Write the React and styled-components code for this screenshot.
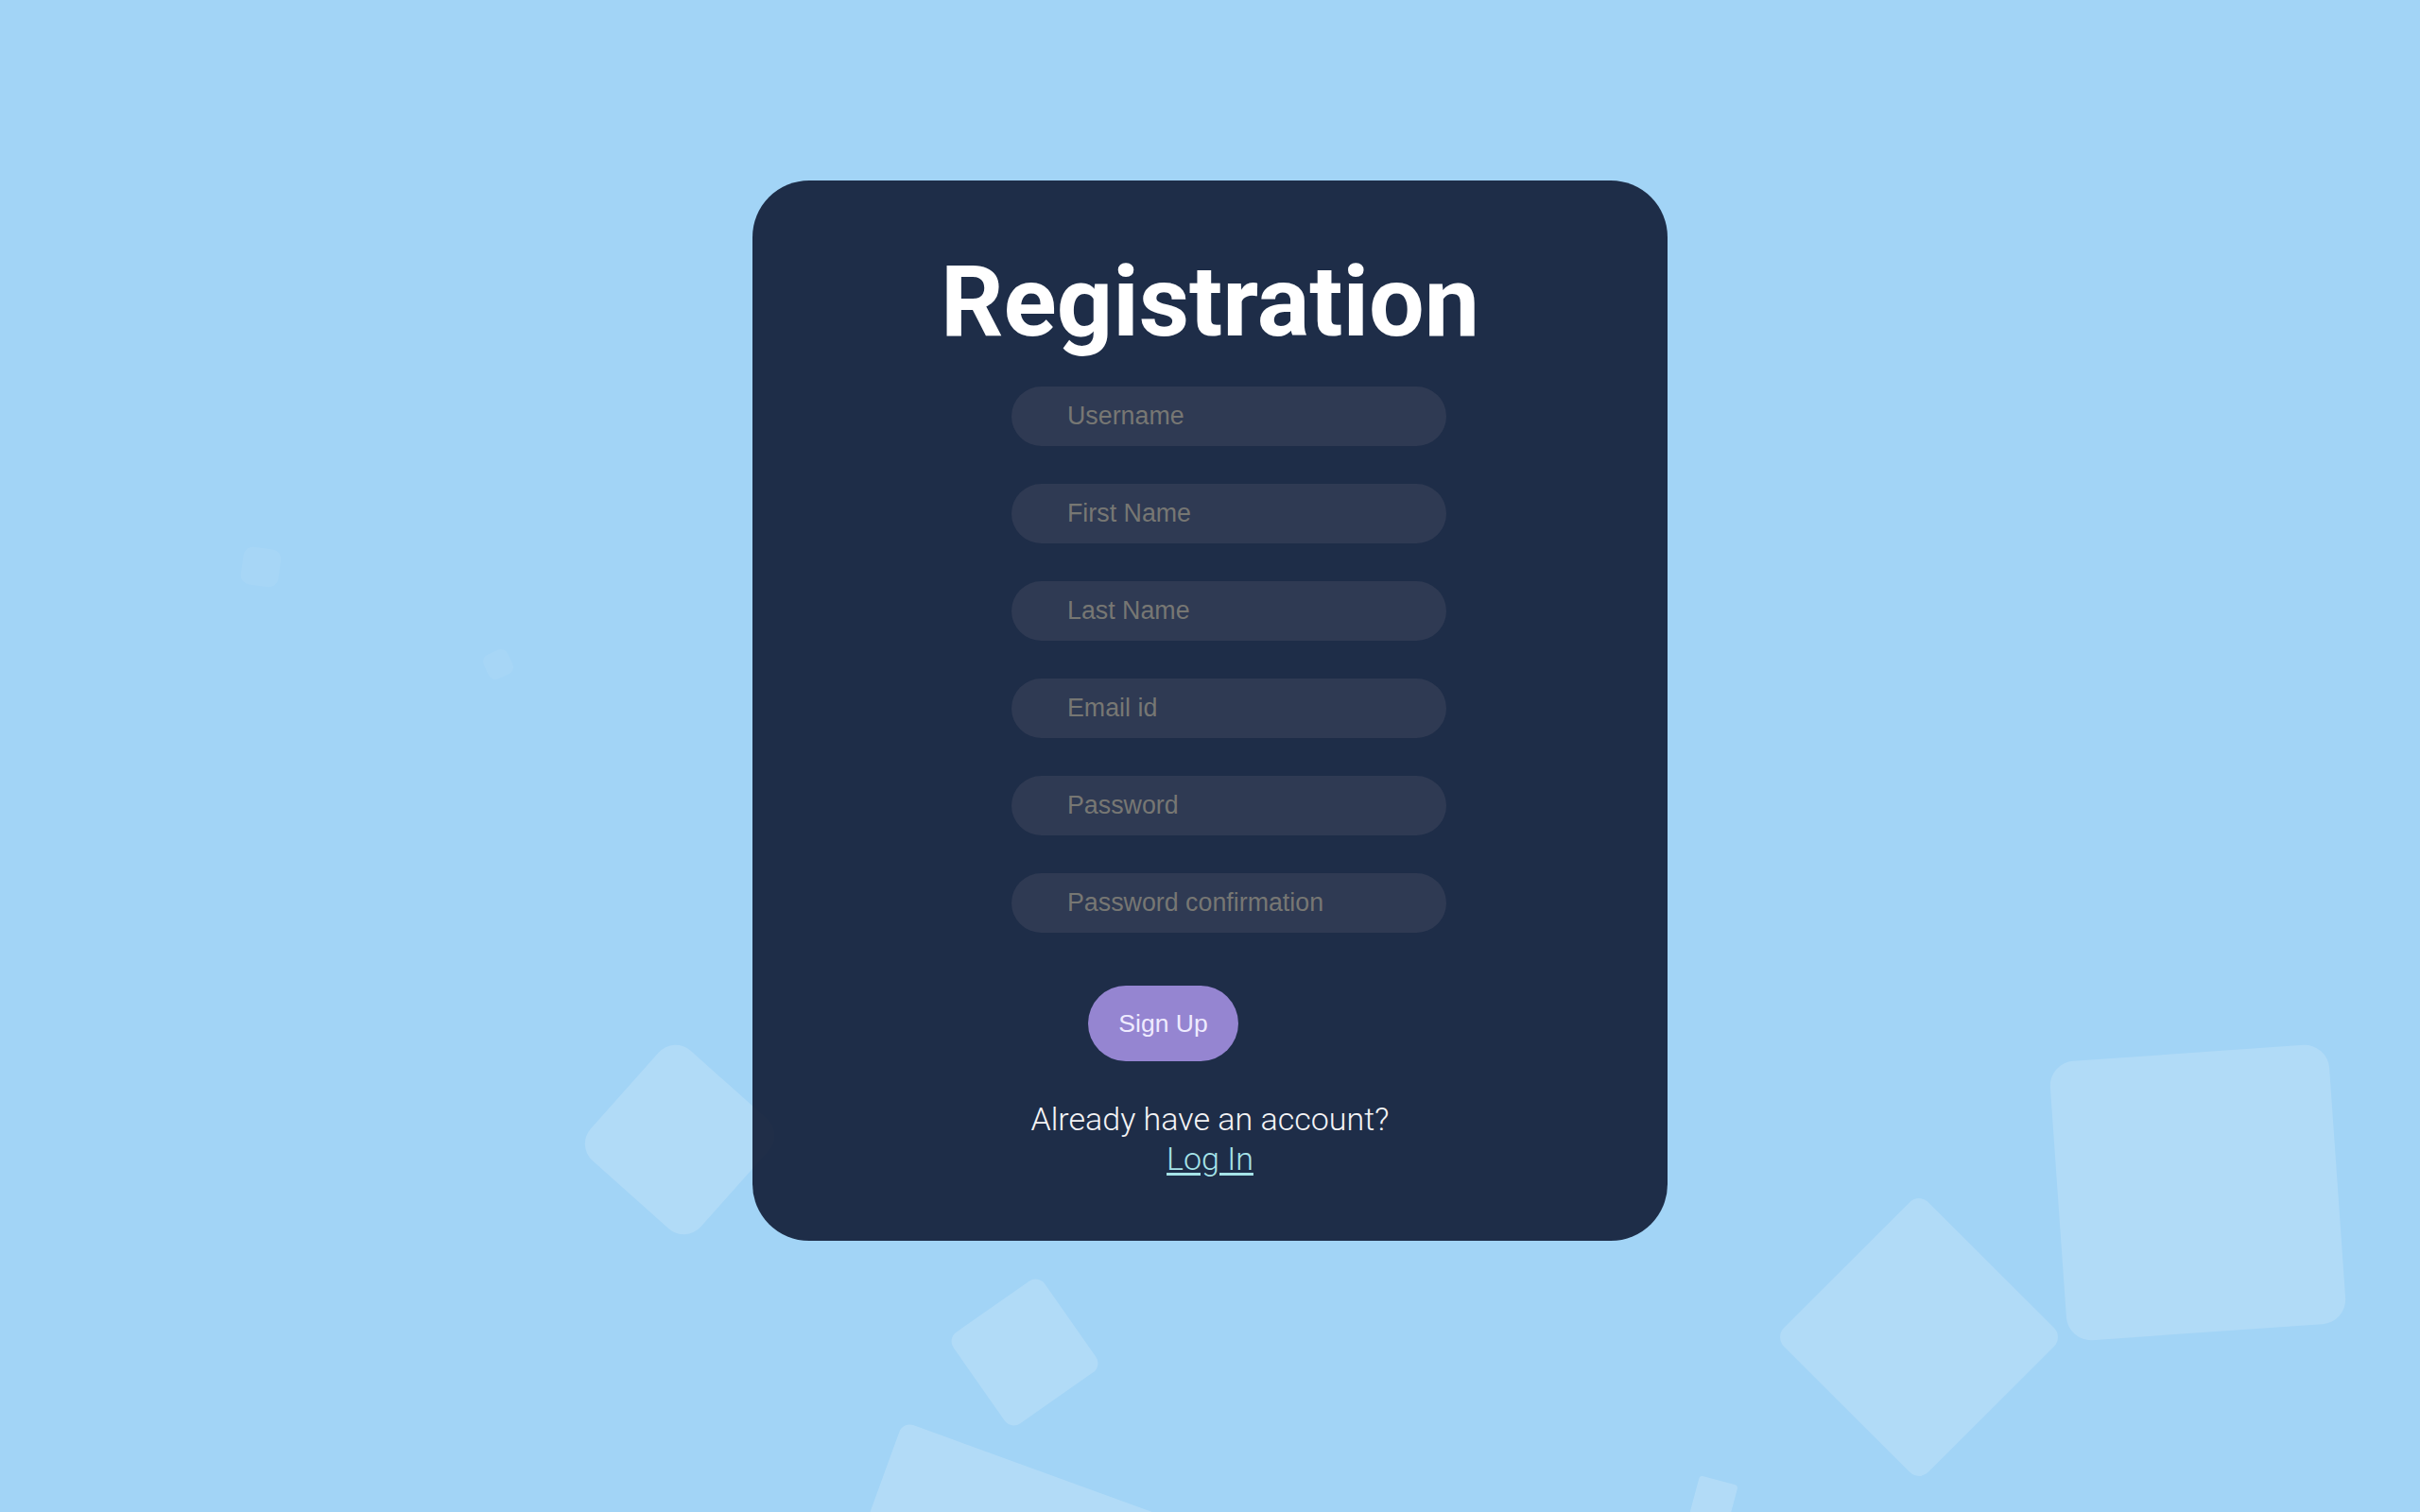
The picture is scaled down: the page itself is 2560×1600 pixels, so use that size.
import styled, { createGlobalStyle } from 'styled-components'

const GlobalStyle = createGlobalStyle`
  html, body {
    margin: 0;
    padding: 0;
    background-color: #a2d4f6;
    overflow: hidden;
  }
  * {
    box-sizing: border-box;
  }
`

// floating squares behind the card
const shapes = [
  { x: 276, y: 600, size: 40, rot: 8, radius: 10, alpha: 0.06 },
  { x: 527, y: 703, size: 28, rot: -25, radius: 8, alpha: 0.06 },
  { x: 719, y: 1206, size: 156, rot: 41.7, radius: 24, alpha: 0.16 },
  { x: 1084, y: 1431, size: 118, rot: 55, radius: 12, alpha: 0.16 },
  { x: 1057, y: 1722, size: 340, rot: 20, radius: 12, alpha: 0.18 },
  { x: 1684, y: 1266, size: 38, rot: 45, radius: 6, alpha: 0.05 },
  { x: 1813, y: 1587, size: 42, rot: 15, radius: 4, alpha: 0.18 },
  { x: 2030, y: 1415, size: 216, rot: 45, radius: 14, alpha: 0.16 },
  { x: 2325, y: 1262, size: 296, rot: -4, radius: 26, alpha: 0.16 },
]

const fields = [
  { name: 'username', type: 'text', placeholder: 'Username' },
  { name: 'first_name', type: 'text', placeholder: 'First Name' },
  { name: 'last_name', type: 'text', placeholder: 'Last Name' },
  { name: 'email', type: 'email', placeholder: 'Email id' },
  { name: 'password', type: 'password', placeholder: 'Password' },
  { name: 'password_confirmation', type: 'password', placeholder: 'Password confirmation' },
]

export default function App() {
  return (
    <>
      <GlobalStyle />
      <Page>
        <Squares>
          {shapes.map((s, i) => (
            <Square
              key={i}
              style={{
                left: s.x - s.size / 2,
                top: s.y - s.size / 2,
                width: s.size,
                height: s.size,
                borderRadius: s.radius,
                transform: `rotate(${s.rot}deg)`,
                background: `rgba(255, 255, 255, ${s.alpha})`,
              }}
            />
          ))}
        </Squares>

        <Card>
          <Title>Registration</Title>
          <Form onSubmit={(e) => e.preventDefault()}>
            {fields.map(field => (
              <Input key={field.name} name={field.name} type={field.type} placeholder={field.placeholder} />
            ))}
            <SignUp type="submit">Sign Up</SignUp>
          </Form>
          <Footer>
            <p>Already have an account?</p>
            <a href="#login">Log In</a>
          </Footer>
        </Card>
      </Page>
    </>
  )
}


const Page = styled.div`
  position: relative;
  width: 100vw;
  height: 100vh;
  overflow: hidden;
  padding-top: 191px;
`

const Squares = styled.div`
  position: absolute;
  inset: 0;
  z-index: 0;
`

const Square = styled.span`
  position: absolute;
  display: block;
`

const Card = styled.div`
  position: relative;
  z-index: 1;
  width: 968px;
  height: 1122px;
  margin: 0 auto;
  padding-top: 77px;
  border-radius: 60px;
  background-color: rgba(8, 17, 43, 0.86);
  display: flex;
  flex-direction: column;
  align-items: center;
`

const Title = styled.h1`
  margin: 0;
  font-family: Roboto, "Open Sans", sans-serif;
  font-weight: 700;
  font-size: 104px;
  line-height: 104px;
  color: #ffffff;
`

const Form = styled.form`
  width: 460px;
  margin: 37px 0 0 40px;
  display: flex;
  flex-direction: column;
  align-items: flex-start;
  gap: 40px;
`

const Input = styled.input`
  width: 100%;
  height: 63px;
  padding: 0 20px 0 59px;
  border: none;
  outline: none;
  border-radius: 32px;
  background-color: #2f3a53;
  color: #e8e8e8;
  font-family: "Liberation Sans", Arial, sans-serif;
  font-size: 26.8px;

  &::placeholder {
    color: #777773;
  }
`

const SignUp = styled.button`
  margin: 16px 0 0 81px;
  width: 159px;
  height: 80px;
  border: none;
  border-radius: 40px;
  background-color: #9585d1;
  color: #efebff;
  font-family: "Liberation Sans", Arial, sans-serif;
  font-size: 26.5px;
  cursor: pointer;
`

const Footer = styled.div`
  margin-top: 40px;
  text-align: center;
  font-family: Roboto, "Open Sans", sans-serif;
  font-weight: 300;
  font-size: 34px;
  line-height: 42px;
  color: #f4f4f6;

  p {
    margin: 0;
  }

  a {
    color: #a6e3e8;
    text-decoration: underline;
    text-underline-offset: 3px;
  }
`
